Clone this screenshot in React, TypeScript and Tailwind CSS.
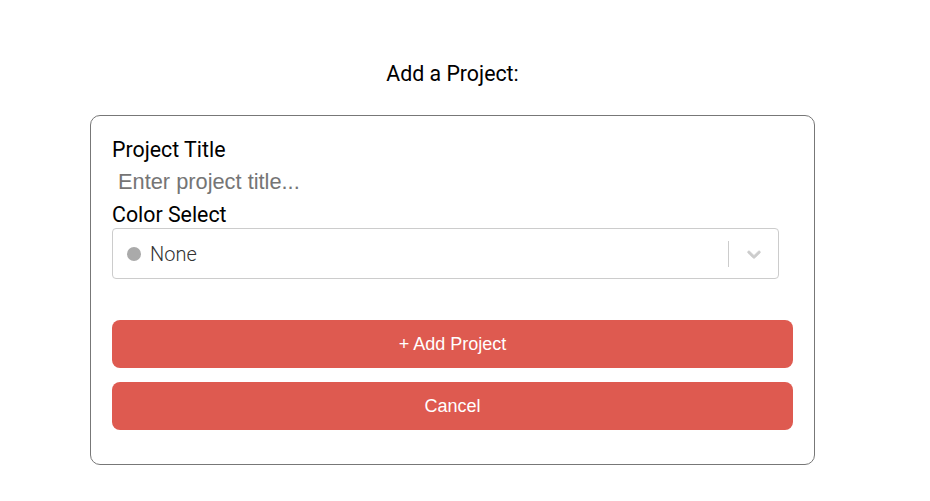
import React from "react";

export default function App() {
  return (
    <div className="w-[930px] h-[501px] bg-white" style={{ fontFamily: "Roboto, sans-serif" }}>
      <div className="pt-[61px] w-[905px] text-center text-[21.33px] leading-[26px] text-black">Add a Project:</div>
      <div className="ml-[90px] mt-[28px] w-[725px] border border-[#777] rounded-[10px] px-[21px] pt-[21px] pb-[34px]">
        <div className="text-[21.33px] leading-[26px] text-black">Project Title</div>
        <input
          placeholder="Enter project title..."
          className="block w-full mt-[7px] px-[6px] h-[24px] text-[21.8px] outline-none placeholder:text-[#757575]"
          style={{ fontFamily: "'Liberation Sans', Arial, sans-serif" }}
        />
        <div className="mt-[8px] text-[21.33px] leading-[26px] text-black">Color Select</div>
        <div className="w-[667px] h-[51px] border border-[#ccc] rounded-[4px] flex items-center">
          <div className="flex-1 flex items-center pl-[14px]">
            <span className="w-[14px] h-[14px] rounded-full bg-[#aaa]" />
            <span className="ml-[9px] text-[20px] font-light text-[#333]">None</span>
          </div>
          <div className="w-px h-[26px] bg-[#ccc]" />
          <div className="w-[49px] flex items-center justify-center text-[#ccc]">
            <svg width="22" height="22" viewBox="0 0 20 20" fill="currentColor" stroke="currentColor" strokeWidth="0.6">
              <path d="M4.516 7.548c0.436-0.446 1.043-0.481 1.576 0l3.908 3.747 3.908-3.747c0.533-0.481 1.141-0.446 1.574 0 0.436 0.445 0.408 1.197 0 1.615-0.406 0.418-4.695 4.502-4.695 4.502-0.217 0.223-0.502 0.335-0.787 0.335s-0.57-0.112-0.789-0.335c0 0-4.287-4.084-4.695-4.502s-0.436-1.17 0-1.615z" />
            </svg>
          </div>
        </div>
        <button
          className="mt-[41px] w-full h-[48px] rounded-[8px] bg-[#de5a50] text-white text-[18px] flex items-center justify-center"
          style={{ fontFamily: "'Liberation Sans', Arial, sans-serif" }}
        >
          + Add Project
        </button>
        <button
          className="mt-[14px] w-full h-[48px] rounded-[8px] bg-[#de5a50] text-white text-[18px] flex items-center justify-center"
          style={{ fontFamily: "'Liberation Sans', Arial, sans-serif" }}
        >
          Cancel
        </button>
      </div>
    </div>
  );
}
